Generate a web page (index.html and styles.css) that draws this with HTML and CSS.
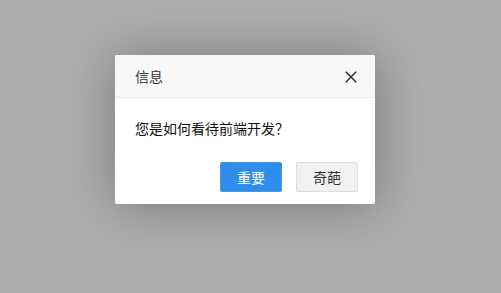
FILE: index.html
```html
<!DOCTYPE html>
<html lang="zh-CN">
<head>
<meta charset="utf-8">
<title>信息</title>
<link rel="stylesheet" href="styles.css">
</head>
<body>
<div class="layer">
  <div class="layer-title">
    <span class="title-text">信息</span>
    <span class="close" aria-label="关闭">
      <svg width="12" height="12" viewBox="0 0 12 12"><path d="M0.8 0.8 L11.2 11.2 M11.2 0.8 L0.8 11.2" stroke="#2f2e3a" stroke-width="1.5" fill="none"/></svg>
    </span>
  </div>
  <div class="layer-content">您是如何看待前端开发？</div>
  <div class="layer-btns">
    <a class="btn btn-primary">重要</a>
    <a class="btn">奇葩</a>
  </div>
</div>
</body>
</html>
```
FILE: styles.css
```css
html, body {
  margin: 0;
  padding: 0;
}
body {
  width: 501px;
  height: 293px;
  background: #adadad;
  font-family: "Noto Sans CJK SC", "Noto Sans", sans-serif;
  font-size: 14px;
  padding: 55px 0 0 115px;
  box-sizing: border-box;
  overflow: hidden;
}
.layer {
  width: 260px;
  background: #fff;
  border-radius: 2px;
  box-shadow: 1px 1px 50px rgba(0, 0, 0, 0.3);
}
.layer-title {
  height: 42px;
  background: #f8f8f8;
  border-bottom: 1px solid #eee;
  border-radius: 2px 2px 0 0;
  display: flex;
  align-items: center;
  justify-content: space-between;
  padding: 0 18px 0 20px;
  color: #333;
}
.title-text {
  line-height: 42px;
}
.close {
  display: flex;
  width: 12px;
  height: 12px;
  margin-top: 1px;
}
.layer-content {
  padding: 20px 20px 19px;
  line-height: 20px;
  color: #111;
}
.layer-btns {
  display: flex;
  justify-content: flex-end;
  gap: 14px;
  padding: 5px 17px 12px 0;
}
.btn {
  display: block;
  height: 28px;
  line-height: 28px;
  padding: 0 16px;
  border: 1px solid #dedede;
  background: #f1f1f1;
  color: #333;
  border-radius: 2px;
}
.btn-primary {
  border-color: #4898d5;
  background: #2e8ded;
  color: #fff;
}
```
